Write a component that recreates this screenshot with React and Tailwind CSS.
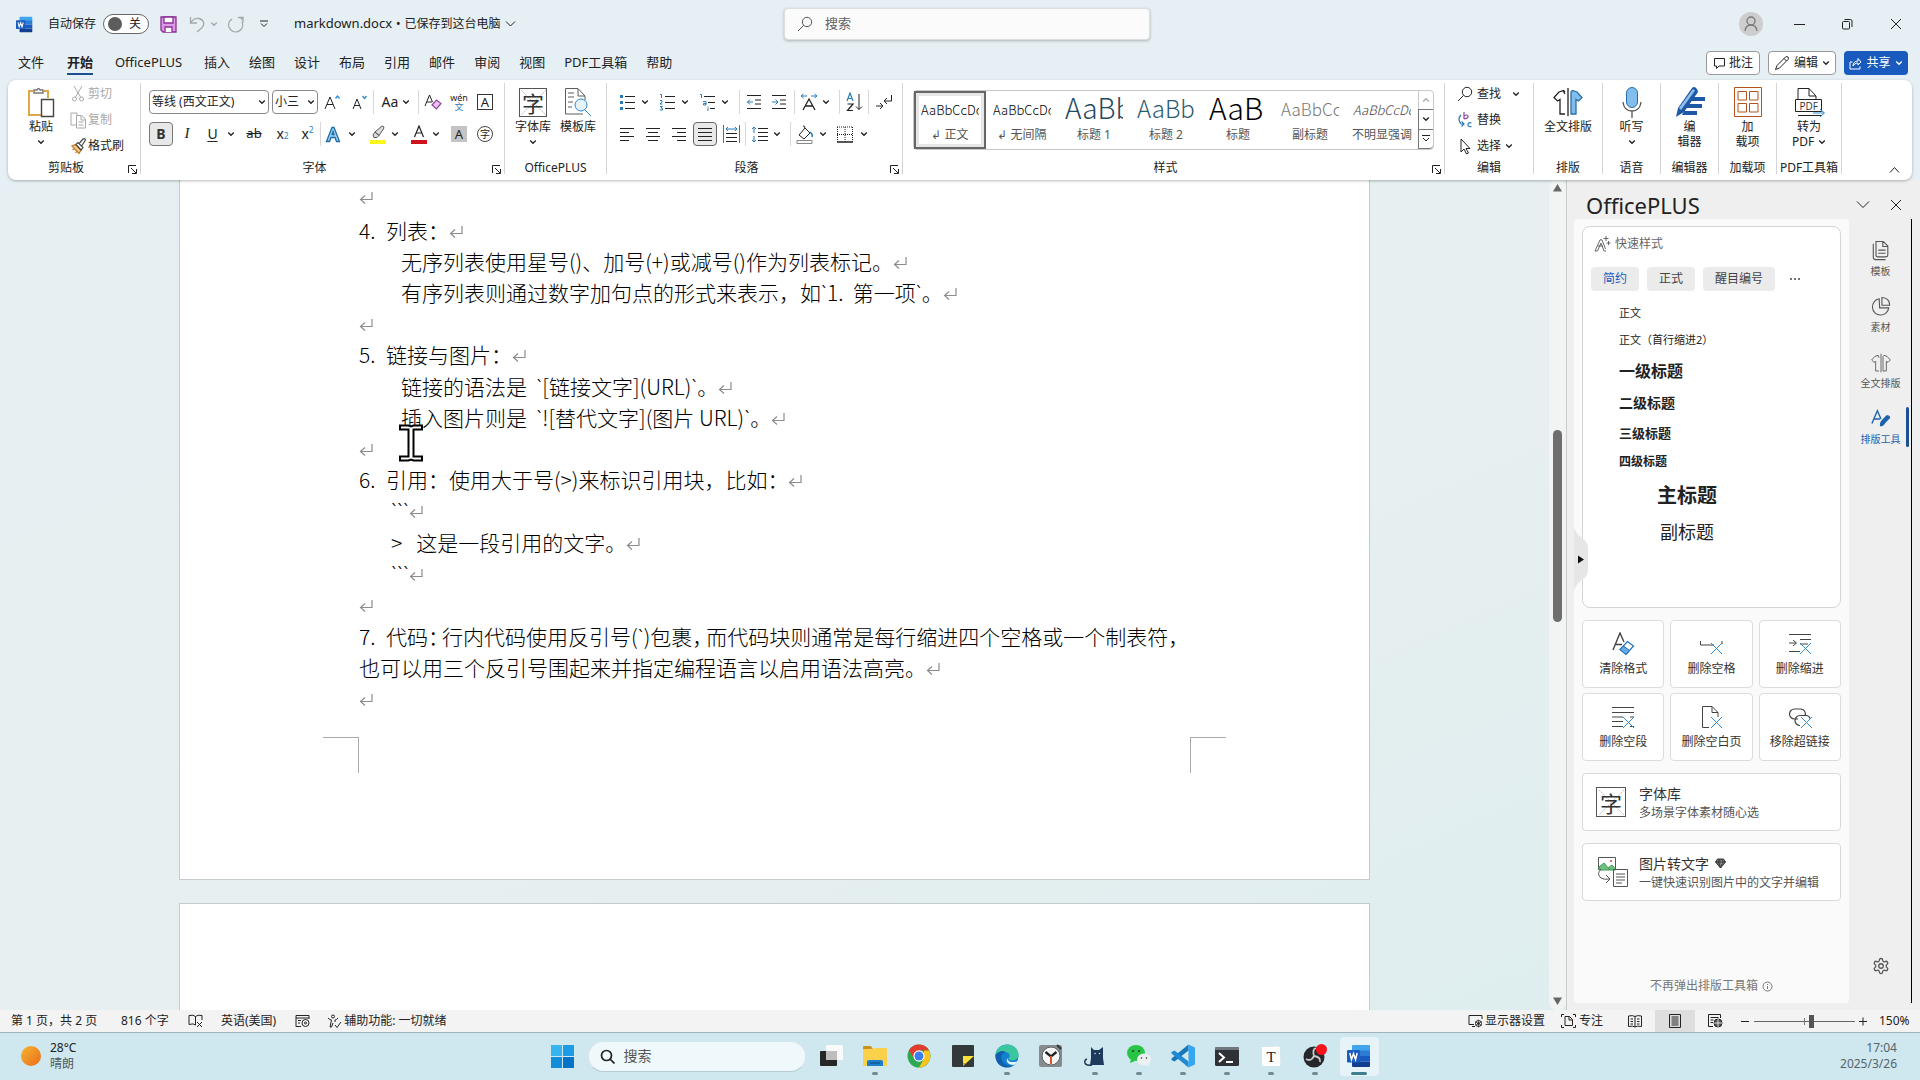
import React from 'react';

const Svg = ({ w = 16, h = 16, box, sw = 1, children, className = '' }) => (
  <svg width={w} height={h} viewBox={box || `0 0 ${w} ${h}`} fill="none" stroke="currentColor" strokeWidth={sw} className={'shrink-0 ' + className} aria-hidden="true">
    {children}
  </svg>
);
const Chev = ({ className = '' }) => (
  <Svg w={8} h={8} sw={1.3} className={className}><path d="M1.2 2.5 4 5.3 6.8 2.5" /></Svg>
);
const C = ({ w, label, className = '', children }) => (
  <button type="button" aria-label={label} className={`flex h-6 shrink-0 items-center justify-center ${w} ${className}`}>{children}</button>
);
const Drop = ({ w = 'w-3', label = '更多选项' }) => <C w={w} label={label}><Chev /></C>;
const Bar = ({ className = '' }) => <div className={`h-6 w-px shrink-0 self-center bg-[#d8d8d8] ${className}`} />;
const Sep = () => <div className="mb-[6px] mt-[3px] w-px shrink-0 bg-[#d4d4d4]" />;
const Launcher = () => (
  <button type="button" aria-label="对话框启动器" className="absolute bottom-[6px] right-[3px]">
    <Svg w={9} h={9}><path d="M.5 8V.5H8M3 3l5 5M8.5 4v4.5H4" /></Svg>
  </button>
);
const Group = ({ w, title, launcher, children }) => (
  <>
    <section className={`relative flex flex-col ${w}`}>
      <div className="h-[76px]">{children}</div>
      <div className={`h-6 whitespace-nowrap text-center leading-6 ${launcher ? 'pr-4' : ''}`}>{title}</div>
      {launcher && <Launcher />}
    </section>
    <Sep />
  </>
);
const Big = ({ w = 'w-full', icon, lines, chev }) => (
  <button type="button" className={`flex flex-col items-center pt-[6px] ${w}`}>
    <span className="mb-px flex h-8 items-center justify-center">{icon}</span>
    {lines.map((l, i) => <span key={i} className="whitespace-nowrap leading-[15px]">{l}</span>)}
    {chev && <Chev className="mt-1" />}
  </button>
);

const WordLogo = ({ s = 16 }) => (
  <Svg w={s} h={s} box="0 0 24 24" className="stroke-none">
    <path d="M6 1h16a1 1 0 0 1 1 1v5H5V2a1 1 0 0 1 1-1Z" fill="#41a5ee" />
    <path d="M5 6.500h18V12H5z" fill="#2b7cd3" />
    <path d="M5 12h18v5.500H5z" fill="#185abd" />
    <path d="M5 17.500h18V22a1 1 0 0 1-1 1H6a1 1 0 0 1-1-1Z" fill="#103f91" />
    <rect x="0" y="6" width="13" height="12.500" rx="1" fill="#1b5cbe" />
    <path d="m2.800 9 1.700 6.500L6.500 9.500l2 6L10.200 9" stroke="#fff" strokeWidth="1.500" />
  </Svg>
);
const GlassIcon = ({ s = 16 }) => (
  <Svg w={s} h={s} box="0 0 16 16"><circle cx="10" cy="6" r="4.700" /><path d="M6.600 9.400 1 15" /></Svg>
);
const GlyphBox = ({ big }) => (
  <span className={`relative flex items-center justify-center border border-[#555] text-[#333] ${big ? 'h-[30px] w-[30px]' : 'h-[29px] w-[28px]'}`}>
    <Svg w={27} h={27} className="absolute text-[#bbb]"><path d="M1 1l25 25M26 1 1 26" strokeDasharray="2 1" /></Svg>
    <span className="relative font-['Noto_Sans_CJK_SC',sans-serif] text-[22px] leading-[26px]">字</span>
  </span>
);
const Shirt = ({ w = 30, h = 28, fill = '#83bdeb', blue = '#2b6fa8' }) => (
  <Svg w={w} h={h} box="0 0 30 28" sw={1.3}>
    <path d="M12 4 10.500 2.500 6 4 1 9.500l3.500 3.500 2.500-1.500V26h5M10 2.500 12 6" />
    <path d="M18 4l1.500-1.500L24 4l5 5.500-3.500 3.500-2.500-1.500V26h-5Z" fill={fill} stroke={blue} />
    <path d="M15 0v28" />
  </Svg>
);
const lines = (a) => a.map(([x1, x2, y], i) => <path key={i} d={`M${x1} ${y}H${x2}`} />);
const Align = ({ kind }) => {
  const m = {
    left: [[1, 15, 2.5], [1, 10, 6.5], [1, 15, 10.5], [1, 10, 14.5]],
    center: [[1, 15, 2.5], [3, 13, 6.5], [1, 15, 10.5], [3, 13, 14.5]],
    right: [[1, 15, 2.5], [6, 15, 6.5], [1, 15, 10.5], [6, 15, 14.5]],
    full: [[1, 15, 2.5], [1, 15, 6.5], [1, 15, 10.5], [1, 15, 14.5]],
  };
  return <Svg w={16} h={17}>{lines(m[kind])}</Svg>;
};
const Cross = ({ x, y, s = 11 }) => <path d={`M${x} ${y}l${s} ${s}M${x + s} ${y}l${-s} ${s}`} stroke="#2a8ad4" />;

function TitleBar() {
  return (
    <header className="flex h-12 items-center">
      <div className="flex flex-1 items-center pl-4">
        <WordLogo s={17} />
        <span id="autosave" className="ml-[15px]">自动保存</span>
        <button type="button" role="switch" aria-checked="false" aria-labelledby="autosave" className="ml-[7px] flex h-5 w-[46px] items-center justify-between rounded-full border border-[#666] bg-white pl-1 pr-[7px]">
          <span className="h-[14px] w-[14px] rounded-full bg-[#5c5c5c]" /><span>关</span>
        </button>
        <button type="button" aria-label="保存" className="ml-[11px] text-[#8a2f95]">
          <Svg w={17} h={17} sw={1.3}><path d="M1 1h15v15H3l-2-2Z" fill="#dd9be4" /><path d="M4 1h9v6H4zM5 16v-5h7v5" fill="#fff" /></Svg>
        </button>
        <button type="button" aria-label="撤消" className="ml-3 text-[#a3a8ab]"><Svg w={16} h={17} sw={1.3}><path d="M1.500 1v6H8M1.500 7C4 3 7 2 10 2.500c5 1 6 6 3 9L8 16" /></Svg></button>
        <Chev className="ml-[5px] text-[#a3a8ab]" />
        <button type="button" aria-label="恢复" className="ml-[9px] text-[#a3a8ab]"><Svg w={17} h={17} sw={1.3}><path d="M11 1.500h5v5M15.500 1.500 14 3.500M14.800 5.500a7 7 0 1 1-12-.5L5 3" /></Svg></button>
        <button type="button" aria-label="自定义快速访问工具栏" className="ml-4"><Svg w={8} h={8}><path d="M0 1h8M1 3.500l3 3 3-3" /></Svg></button>
        <button type="button" className="ml-[26px] flex items-center whitespace-nowrap"><span className="mr-1 text-[13px]">markdown.docx</span>•<span className="ml-1">已保存到这台电脑</span><Svg w={11} h={8} className="ml-1"><path d="m1 1.500 4.500 4.500L10 1.500" /></Svg></button>
      </div>
      <label className="ml-4 flex h-8 w-[366px] items-center rounded border border-[#dcdfe1] bg-[#fbfbfb] px-3 text-[#555] shadow-[0_1px_3px_rgba(0,0,0,0.25)]">
        <GlassIcon />
        <input aria-label="搜索" placeholder="搜索" className="ml-3 w-full bg-transparent text-[13px] outline-none placeholder:text-[#616161]" />
      </label>
      <div className="flex flex-1 items-center justify-end pr-[18px]">
        <button type="button" aria-label="账户" className="mr-[31px] flex h-6 w-6 items-center justify-center rounded-full bg-[#cdcdcd] text-[#777]"><Svg w={16} h={18} sw={1.3}><circle cx="8" cy="6" r="4" /><path d="M2 16c.5-4 3-6 6-6s5.500 2 6 6" /></Svg></button>
        <button type="button" aria-label="最小化" className="mr-[37px]"><Svg w={11} h={12}><path d="M0 6.500h11" /></Svg></button>
        <button type="button" aria-label="向下还原" className="mr-[37px]"><Svg w={11} h={12}><rect x=".5" y="3.500" width="7" height="7.500" rx="1" /><path d="M2.500 1.500h6q1.500 0 1.500 1.500v6" /></Svg></button>
        <button type="button" aria-label="关闭"><Svg w={12} h={12}><path d="m1 1 10 10M11 1 1 11" /></Svg></button>
      </div>
    </header>
  );
}

function Tabs() {
  const tabs = ['插入', '绘图', '设计', '布局', '引用', '邮件', '审阅', '视图', 'PDF工具箱', '帮助'];
  return (
    <div className="flex h-8 items-start pl-[18px] pr-3 text-[13px]">
      <nav className="flex gap-[19px] whitespace-nowrap leading-7">
        <button type="button" className="mr-1">文件</button>
        <button type="button" className="h-[27px] border-b-2 border-[#1d4f91] font-bold leading-7">开始</button>
        <button type="button" className="min-w-[73px]">OfficePLUS</button>
        {tabs.map((t) => <button type="button" key={t}>{t}</button>)}
      </nav>
      <div className="ml-auto flex gap-2 pt-[3px] text-xs">
        <button type="button" className="flex h-6 w-[54px] items-center justify-center gap-[3px] rounded border border-[#999] bg-white"><Svg w={13} h={13}><path d="M1.500 1.500h10v7.500H6l-2.500 2.500V9h-2Z" /></Svg>批注</button>
        <button type="button" className="flex h-6 w-[68px] items-center justify-center gap-1 rounded border border-[#999] bg-white"><Svg w={16} h={16}><path d="M1.500 14.500 3 10.500 11.500 2q1.500-1 2.500 0t0 2.500L5.500 13ZM10 3.500 12.500 6" /></Svg>编辑<Chev /></button>
        <button type="button" className="flex h-6 w-[64px] items-center justify-center gap-1 rounded bg-[#185abd] text-white"><Svg w={13} h={13}><path d="M3.500 5H1v7h10V9.500M4 9c0-3 2-5 5-5V1.500L12 5 9 8V6C7 6 5 7 4 9Z" /></Svg>共享<Chev /></button>
      </div>
    </div>
  );
}

const styleItems = [
  ['AaBbCcDdE', '↲ 正文', 'text-[13px] leading-8 text-black'],
  ['AaBbCcDdE', '↲ 无间隔', 'text-[13px] leading-8 text-black'],
  ['AaBbC', '标题 1', 'text-[28px] leading-[26px] text-[#1f4a5f]'],
  ['AaBb', '标题 2', 'text-[24px] leading-[28px] text-[#2d5b70]'],
  ['AaB', '标题', 'text-[30px] leading-[26px] text-black'],
  ['AaBbCcD', '副标题', 'text-[17px] leading-[30px] text-[#777]'],
  ['AaBbCcDdE', '不明显强调', 'text-[13px] leading-8 italic text-[#444]'],
];

function Ribbon() {
  return (
    <div className="relative z-10 mx-2 flex h-[100px] rounded-lg bg-white shadow-[0_1px_3px_rgba(0,0,0,0.28)]">
      <Group w="w-[132px]" title="剪贴板" launcher>
        <div className="flex">
          <Big w="w-[66px]" lines={['粘贴']} chev icon={<Svg w={28} h={31} sw={1.4}><path d="M6 4H2v24h12M17 4h4v7" stroke="#e0a64a" strokeWidth="2" /><path d="M7 6V3h3q1.500-3 3 0h3v3Z" fill="#fff" stroke="#777" /><path d="M14.500 12.500h12v17h-12z" fill="#fff" stroke="#444" /></Svg>} />
          <div className="flex flex-col pt-px">
            <button type="button" className="flex h-[26px] w-14 items-center text-[#a9a9a9]"><Svg w={12} h={16} className="mr-[4px] -ml-[2px]"><path d="M2 0l6.500 11M10 0 3.500 11" /><circle cx="2.500" cy="13" r="2" /><circle cx="9.500" cy="13" r="2" /></Svg>剪切</button>
            <button type="button" className="flex h-[26px] w-14 items-center text-[#a9a9a9]"><Svg w={17} h={17} className="mr-px -ml-1"><path d="M7 13H1V1h6v2M6.500 3.500h5L15.500 7v9h-9zM11 4v4h4M8.500 10h5M8.500 13h5" /></Svg>复制</button>
            <button type="button" className="flex h-[26px] w-14 items-center whitespace-nowrap"><Svg w={17} h={17} className="mr-px -ml-1" sw={1.2}><path d="M2 8 9 15.500 11 12 5.500 6.500ZM4.500 10.500 2.500 12M7 13l-1.500 2" stroke="#c47a28" fill="#f6c88b" /><path d="m6 6.500 2-2 5 5-2 2.500ZM9.500 5 13 1q2-1 2.500 1L12 7.500" stroke="#444" fill="#fff" /></Svg>格式刷</button>
          </div>
        </div>
      </Group>
      <Group w="w-[363px]" title="字体" launcher>
        <div className="flex items-center pl-2 pt-[10px]">
          <span className="relative w-[120px]"><select aria-label="字体" className="block h-6 w-full appearance-none rounded border border-[#8a8a8a] bg-white pl-[2px]"><option>等线 (西文正文)</option></select><Chev className="pointer-events-none absolute right-[3px] top-2" /></span>
          <span className="relative ml-[3px] w-[46px]"><select aria-label="字号" className="block h-6 w-full appearance-none rounded border border-[#8a8a8a] bg-white pl-[2px]"><option>小三</option></select><Chev className="pointer-events-none absolute right-[3px] top-2" /></span>
          <C w="w-7" label="增大字号"><Svg w={17} h={17}><path d="M1 15 6 3l5 12M3 10.500h6" /><path d="m11.500 4.500 2-2.500 2 2.500" stroke="#2a8ad4" strokeWidth="1.300" /></Svg></C>
          <C w="w-[27px]" label="减小字号"><Svg w={16} h={17}><path d="m1 15 4-10 4 10M2.500 11.500h5" /><path d="m10.500 2 2 2.500 2-2.500" stroke="#2a8ad4" strokeWidth="1.300" /></Svg></C>
          <Bar />
          <C w="w-11" label="更改大小写" className="gap-1 text-[14px]"><span>Aa</span><Chev /></C>
          <Bar />
          <C w="w-[27px]" label="清除所有格式"><Svg w={18} h={18}><path d="M1 13 5.500 2l3 7M3 9h5" /><path d="m8 12 4.500-5L17 10.500 12.500 16Z" fill="#e6c4ef" stroke="#93449f" strokeWidth="1.200" /></Svg></C>
          <C w="w-[26px]" label="拼音指南" className="flex-col"><span className="text-[9px] leading-[9px]">wén</span><span className="text-[9px] leading-[10px] text-[#2a7bb8]">文</span></C>
          <C w="w-[26px]" label="字符边框"><span className="flex h-4 w-4 items-center justify-center border border-[#333] text-[13px] leading-3">A</span></C>
        </div>
        <div className="flex items-center pl-2 pt-2">
          <C w="w-6" label="加粗" className="rounded border border-[#777] bg-[#e8e8e8] text-[14px] font-bold text-[#333]">B</C>
          <C w="w-7" label="倾斜" className="font-['Liberation_Serif',serif] text-[15px] italic">I</C>
          <C w="w-[23px]" label="下划线" className="text-[14px] underline underline-offset-2">U</C>
          <Drop w="w-[14px]" />
          <C w="w-8" label="删除线" className="text-[13px] line-through">ab</C>
          <C w="w-[25px]" label="下标" className="text-[14px]">x<sub className="text-[8px] text-[#2a7bb8]">2</sub></C>
          <C w="w-[25px]" label="上标" className="text-[14px]">x<sup className="text-[8px] text-[#2a7bb8]">2</sup></C>
          <Bar />
          <C w="w-6" label="文本效果"><Svg w={16} h={17}><path d="M1.500 15.500 7 1.500h2l5.500 14h-3L10 11.500H6L4.500 15.500ZM7 8.500h2L8 5.500Z" fill="#9fd0f2" stroke="#1c6ea8" strokeWidth="1.300" /></Svg></C>
          <Drop w="w-[14px]" />
          <C w="w-[23px]" label="突出显示颜色" className="ml-[7px]"><Svg w={18} h={19}><path d="M1 15h16v4H1z" fill="#fdf61d" stroke="none" /><path d="M5 12.500 4 10l2-3 4 3.500-2 2ZM6 7l7-6q2 0 2 2l-5 7.500Z" fill="#ddd" stroke="#555" /></Svg></C>
          <Drop />
          <C w="w-[23px]" label="字体颜色" className="ml-[6px]"><Svg w={18} h={19}><path d="M1 15h16v4H1z" fill="#d0121c" stroke="none" /><path d="M4.500 12 9 1l4.500 11M6 8h6" strokeWidth="1.200" /></Svg></C>
          <Drop />
          <C w="w-[26px]" label="字符底纹" className="ml-1"><span className="flex h-4 w-4 items-center justify-center bg-[#c4c4c4] text-[13px] leading-4">A</span></C>
          <C w="w-[26px]" label="带圈字符"><span className="flex h-4 w-4 items-center justify-center rounded-full border border-[#444] text-[10px] leading-[14px]">字</span></C>
        </div>
      </Group>
      <Group w="w-[101px]" title="OfficePLUS">
        <div className="flex pl-[5px]">
          <Big w="w-[46px]" lines={['字体库']} chev icon={<GlyphBox />} />
          <Big w="w-[44px]" lines={['模板库']} icon={<Svg w={28} h={30}><path d="M19 27H1.500V1.500H14L21 9v4M14 2v7h7M4 6h6M4 10h6M4 15h5M4 20h4" stroke="#5c5c5c" /><circle cx="17" cy="18" r="6" stroke="#2a8ad4" fill="#e6f3fb" /><path d="m21 23 6 6" stroke="#2a8ad4" /></Svg>} />
        </div>
      </Group>
      <Group w="w-[295px]" title="段落" launcher>
        <div className="flex items-center pl-[9px] pt-[10px]">
          <C w="w-[22px]" label="项目符号"><Svg w={16} h={18}>{lines([[6, 16, 3.5], [6, 16, 9.5], [6, 16, 15.5]])}<path d="M1 2h3v3H1zM1 8h3v3H1zM1 14h3v3H1z" fill="#2a7bb8" stroke="none" /></Svg></C><Drop w="w-[14px]" />
          <C w="w-[22px]" label="编号" className="ml-1"><Svg w={16} h={18}>{lines([[6, 16, 3.5], [6, 16, 9.5], [6, 16, 15.5]])}<path d="M1 1.500h1.500V5M1 7.500h2v1.500L1 11h2.500M1 13.500h2.500L2 15l1.500.5V17H1" stroke="#2a7bb8" /></Svg></C><Drop w="w-[14px]" />
          <C w="w-[22px]" label="多级列表" className="ml-1"><Svg w={17} h={18}>{lines([[5, 16, 3.5], [9, 16, 9.5], [11, 16, 15.5]])}<path d="M1 1.500h1.500V5M4 8.500h3V12H4.500v-1.500H7M9 13v.5M9 14.500V18" stroke="#2a7bb8" /></Svg></C><Drop w="w-[14px]" />
          <Bar className="ml-[7px]" />
          <C w="w-6" label="减少缩进量" className="ml-[2px]"><Svg w={16} h={16}>{lines([[1, 15, 1.5], [9, 15, 6], [9, 15, 10], [1, 15, 14.5]])}<path d="M7 8H1m3-2.500L1.500 8 4 10.500" stroke="#2a7bb8" /></Svg></C>
          <C w="w-[26px]" label="增加缩进量"><Svg w={16} h={16}>{lines([[1, 15, 1.5], [9, 15, 6], [9, 15, 10], [1, 15, 14.5]])}<path d="M1 8h6M4.500 5.500 7 8l-2.500 2.500" stroke="#2a7bb8" /></Svg></C>
          <Bar className="ml-[2px]" />
          <C w="w-[22px]" label="中文版式" className="ml-[3px]"><Svg w={18} h={18}><path d="m3 17 6-11 6 11M5 13h8" strokeWidth="1.300" /><path d="M7 3H1m2.500-2L1 3l2.500 2M11 3h6m-2.500-2L17 3l-2.500 2" stroke="#2a7bb8" /></Svg></C><Drop />
          <Bar className="ml-[7px]" />
          <C w="w-[26px]" label="排序" className="ml-px"><Svg w={17} h={20}><path d="m1 9 3-8 3 8M2 6.500h4" stroke="#2a7bb8" strokeWidth="1.200" /><path d="M1.500 12H7l-5.500 6.500H7" strokeWidth="1.200" /><path d="M13 2v15.500M10 14.500l3 3 3-3" /></Svg></C>
          <Bar className="ml-px" />
          <C w="w-6" label="显示编辑标记" className="ml-[3px]"><Svg w={18} h={18}><path d="M16.500 2v6H9m3-3L9 8l3 3M1 13h7M5 10l3 3-3 3" /></Svg></C>
        </div>
        <div className="flex items-center pl-[9px] pt-2">
          <C w="w-[22px]" label="左对齐"><Align kind="left" /></C>
          <C w="w-[30px]" label="居中"><Align kind="center" /></C>
          <C w="w-[22px]" label="右对齐"><Align kind="right" /></C>
          <C w="w-6" label="两端对齐" className="ml-[3px] rounded border border-[#666] bg-[#e8e8e8]"><Align kind="full" /></C>
          <C w="w-7" label="分散对齐"><Svg w={17} h={18}>{lines([[3, 14, 8.5], [3, 14, 12.5], [3, 14, 16.500]])}<path d="M.5 0v18M16.500 0v18M3 4h11M5 2 3 4l2 2M12 2l2 2-2 2" stroke="#2a7bb8" /></Svg></C>
          <Bar />
          <C w="w-6" label="行和段落间距" className="ml-[2px]"><Svg w={18} h={17}>{lines([[7, 17, 2.500], [7, 17, 6.500], [7, 17, 10.500], [7, 17, 14.500]])}<path d="M3 1v6M1 3l2-2 2 2M3 10v6M1 14l2 2 2-2" stroke="#2a7bb8" /></Svg></C><Drop w="w-[10px]" />
          <Bar className="ml-2" />
          <C w="w-6" label="底纹" className="ml-[2px]"><Svg w={18} h={19}><path d="m3 10 6-7 5 5-6 6ZM7 1q2-1 2 3" /><path d="M14 7q3 2 2 5" stroke="#2a7bb8" strokeWidth="1.500" /><path d="M1 15.500h15v3H1z" stroke="#888" fill="#fff" /></Svg></C><Drop />
          <C w="w-[26px]" label="边框" className="ml-[3px]"><Svg w={16} h={17}><path d="M.5 1v15M15.500 1v15M8 1v15M0 1h16M0 8.500h16" strokeDasharray="1 1" /><path d="M0 16h16" strokeWidth="1.500" /></Svg></C><Drop />
        </div>
      </Group>
      <section className="relative flex min-w-0 flex-1 flex-col">
        <div className="h-[76px] px-[10px] pt-[10px]">
          <div className="flex h-[60px] rounded border border-[#c9c9c9]">
            <div className="flex min-w-0 flex-1 overflow-hidden">
              {styleItems.map(([s, n, k], i) => (
                <button type="button" key={n} className={`flex w-[72px] shrink-0 flex-col items-center ${i === 0 ? 'border-2 border-[#666] pt-px shadow-[inset_0_0_0_3px_#e6e6e6]' : 'pt-[3px]'}`}>
                  <span className={`h-8 w-[58px] overflow-hidden whitespace-nowrap text-left font-['Noto_Sans_CJK_SC',sans-serif] font-light ${k}`}>{s}</span>
                  <span className="whitespace-nowrap leading-[18px] text-[#555]">{n}</span>
                </button>
              ))}
            </div>
            <div className="flex w-[15px] flex-col">
              <button type="button" aria-label="上一行" className="flex flex-1 items-center justify-center border-l border-[#c9c9c9] text-[#aaa]"><Chev className="rotate-180" /></button>
              <button type="button" aria-label="下一行" className="flex flex-1 items-center justify-center border border-r-0 border-[#777]"><Chev /></button>
              <button type="button" aria-label="其他样式" className="flex flex-1 items-center justify-center rounded-br border border-r-0 border-t-0 border-[#777]"><Svg w={8} h={9}><path d="M0 1.500h8M1 4l3 3 3-3" /></Svg></button>
            </div>
          </div>
        </div>
        <div className="h-6 pr-4 text-center leading-6">样式</div>
        <Launcher />
      </section>
      <Sep />
      <Group w="w-[88px]" title="编辑">
        <div className="flex flex-col pl-3 pt-px">
          <button type="button" className="flex h-[26px] items-center"><GlassIcon /><span className="ml-1 mr-[11px]">查找</span><Chev /></button>
          <button type="button" className="flex h-[26px] items-center"><Svg w={16} h={18} sw={1.2}><path d="M7 1v7M7 5q3-2 4 0t-4 3" stroke="#93449f" /><path d="M14.500 12q-3-1-3.500 1.500t3.500 2M4 4Q0 8 4 13h3M4.500 10.500 7 13l-2.500 2.500" stroke="#2a7bb8" /></Svg><span className="ml-1">替换</span></button>
          <button type="button" className="flex h-[26px] items-center"><Svg w={16} h={17}><path d="M4 1v13l3-3 2.500 5 2-1L9 10.500h4Z" /></Svg><span className="ml-1 mr-1">选择</span><Chev /></button>
        </div>
      </Group>
      <Group w="w-[68px]" title="排版"><Big lines={['全文排版']} icon={<Shirt />} /></Group>
      <Group w="w-[57px]" title="语音"><Big lines={['听写']} chev icon={<Svg w={20} h={31}><rect x="4.500" y=".5" width="11" height="20" rx="5.500" fill="#83bdeb" stroke="#2b6fa8" /><path d="M1 15q1 9 9 9t9-9M10 24v7" stroke="#555" strokeWidth="1.300" /></Svg>} /></Group>
      <Group w="w-[57px]" title="编辑器"><Big lines={['编', '辑器']} icon={<Svg w={31} h={32} className="stroke-none"><path d="M18 11h13v4H16zM14 18h14v4H12zM10 25h13v4H8z" fill="#2058a8" /><path d="M4 22 18 2q2-2 4 0t2 4L10 26l-8 5Z" fill="#2058a8" /><path d="m5 22 14-19 2 1.500L7 24Z" fill="#8fc1ea" /></Svg>} /></Group>
      <Group w="w-[57px]" title="加载项"><Big lines={['加', '载项']} icon={<Svg w={28} h={30} className="text-[#b3521c]"><path d="M.5.500h27v29H.5zM4 4.500h8.500v8.500H4zM15.500 4.500H24v8.500h-8.500zM4 16.500h8.500V25H4zM15.500 16.500H24V25h-8.500z" /></Svg>} /></Group>
      <Group w="w-[64px]" title="PDF工具箱"><Big lines={['转为', <span key="p" className="flex items-center gap-1">PDF<Chev /></span>]} icon={<Svg w={31} h={31}><path d="M4 12V1.500h11L22 9v3M15 1.500V9h7" /><path d="M1.500 12.500h26v12h-26z" fill="#fff" /><text x="5.500" y="22.500" fontSize="10" fill="#333" stroke="none" fontFamily="Open Sans, sans-serif">PDF</text><path d="M4 28.500h24" /><path d="M19 26h11M26 22l4.500 4-4.500 4" stroke="#2a8ad4" /></Svg>} /></Group>
      <div className="relative w-[70px]">
        <button type="button" aria-label="折叠功能区" className="absolute bottom-[6px] right-3"><Svg w={11} h={8}><path d="m1 6.500 4.500-5 4.500 5" /></Svg></button>
      </div>
    </div>
  );
}

const Mark = () => (
  <svg width="14" height="17" viewBox="0 0 14 17" fill="none" stroke="#8c8c8c" strokeWidth="1.200" className="inline-block" aria-hidden="true"><path d="M13 1v7.500H1.500M6 4.500l-4.500 4 4.500 4" /></svg>
);
const N = ({ children }) => <span className="inline-block w-[27px]">{children}</span>;
const Half = ({ children }) => <span className="inline-block w-[14px]">{children}</span>;
const Tick = ({ children = '`' }) => <span className="font-['Roboto',sans-serif]">{children}</span>;
const P = ({ className = '', children }) => <p className={`h-[31px] ${className}`}>{children}</p>;
const Empty = () => <P><Mark /></P>;

function Document() {
  return (
    <main className="relative min-w-0 flex-1 overflow-hidden px-[179px]">
      <article className="relative mx-auto h-[700px] max-w-[1191px] border border-t-0 border-[#c4cbce] bg-white px-[179px] pt-px text-[21px] font-light leading-[31px] text-black">
        <div className="whitespace-pre font-['Noto_Sans_CJK_SC',sans-serif]">
          <Empty />
          <P className="mt-[3px]"><N>4.</N>列表：<Mark /></P>
          <P className="pl-[42px]">无序列表使用星号()、加号(+)或减号()作为列表标记。<Mark /></P>
          <P className="pl-[42px]">有序列表则通过数字加句点的形式来表示，如<Tick />1.  第一项<Tick />。<Mark /></P>
          <Empty />
          <P><N>5.</N>链接与图片：<Mark /></P>
          <P className="mt-px pl-[42px]">链接的语法是  <Tick />[链接文字](URL)<Tick />。<Mark /></P>
          <P className="pl-[42px]">插入图片则是  <Tick />![替代文字](图片 URL)<Tick />。<Mark /></P>
          <Empty />
          <P><N>6.</N>引用：使用大于号(&gt;)来标识引用块，比如：<Mark /></P>
          <P className="pl-8"><Tick>```</Tick><Mark /></P>
          <P className="mt-px pl-8">&gt;   这是一段引用的文字。<Mark /></P>
          <P className="pl-8"><Tick>```</Tick><Mark /></P>
          <Empty />
          <P className="mt-px"><N>7.</N>代码<Half>：</Half>行内代码使用反引号(<Tick />)包裹<Half>，</Half>而代码块则通常是每行缩进四个空格或一个制表符，</P>
          <P>也可以用三个反引号围起来并指定编程语言以启用语法高亮。<Mark /></P>
          <Empty />
        </div>
        <div className="-mx-9 mt-[23px] flex justify-between">
          <div className="h-9 w-9 border-r border-t border-[#aaa]" />
          <div className="h-9 w-9 border-l border-t border-[#aaa]" />
        </div>
        <svg width="24" height="38" viewBox="0 0 24 38" fill="#fff" stroke="#000" strokeWidth="2" className="absolute left-[219px] top-[244px]" aria-hidden="true"><path d="M1 1.500h8.500l2.500 1 2.500-1H23v4h-8.500v27H23v4h-8.500l-2.500-1-2.500 1H1v-4h8.500v-27H1Z" /></svg>
      </article>
      <article className="mx-auto mt-[23px] h-[300px] max-w-[1191px] border border-[#c4cbce] bg-white" />
    </main>
  );
}

function SidePanel() {
  const previews = [
    ['正文', 'text-[11px] leading-[26px]'],
    ['正文（首行缩进2）', 'text-[11px] leading-[28px]'],
    ['一级标题', 'text-[16px] font-bold leading-[34px]'],
    ['二级标题', 'text-[14px] font-bold leading-[30px]'],
    ['三级标题', 'text-[13px] font-bold leading-[30px]'],
    ['四级标题', 'text-[12px] font-bold leading-[28px]'],
    ['主标题', 'pl-[38px] text-[20px] font-bold leading-[39px]'],
    ['副标题', 'pl-[41px] text-[18px] leading-[35px]'],
  ];
  const tools = [
    ['清除格式', <><path d="M2 18 9 1l4 9M4.500 12.500H11" strokeWidth="1.400" /><path d="m9 17.500 7.500-8 6 4.500-7.500 8.500Z" fill="#fff" stroke="#1a6fc0" strokeWidth="1.200" /><path d="m9 17.500 3.500-3.500 6 4.500-3.500 4Z" fill="#69a9e2" stroke="#1a6fc0" /></>],
    ['删除空格', <><path d="M1.500 9v4H15M23 9v3" /><Cross x={12} y={11} /></>],
    ['删除缩进', <><path d="M1 2.500h22M12 7.500h11M12 12h8M1 19.500h11M1 11h7M5 8l3.500 3L5 14" /><Cross x={12} y={11} /></>],
    ['删除空段', <><path d="M1 2.500h22M1 7.500h22M1 12h11M1 16.500h11M1 21.500h11M19 12h4M19 21.500h4" /><Cross x={12} y={12} /></>],
    ['删除空白页', <><path d="M10 22.500H3.500v-21H13l6 6V12M13 1.500v6h6" /><Cross x={12} y={12} /></>],
    ['移除超链接', <><path d="M10 14H6.500a5 5 0 0 1 0-10H13a5 5 0 0 1 4 7M12 20.500a5 5 0 0 1 0-10h7a4 4 0 0 1 3 3" strokeWidth="1.200" /><Cross x={13} y={12} /></>],
  ];
  const rail = [
    ['模板', <><path d="M6.500 1.500h8l5 5v10q0 2-2 2h-9q-2 0-2-2ZM14 1.500V7h5.500M9 11h8M9 14.500h8M3.500 4v15q0 2.500 2.500 2.500h11" /></>],
    ['素材', <><path d="M10 3a9 9 0 1 0 10.500 10H10.500ZM13 1.500V10h8.500q0-8-8.500-8.500Z" /></>],
    ['全文排版', null],
    ['排版工具', <><path d="M2 17 8 3l4 9M4.500 12H11" strokeWidth="1.500" /><path d="M11 20q-1-4 2-7l5-5q4-1 4 3l-5 5q-2 4-6 4Z" fill="#1d62ae" stroke="none" /></>],
  ];
  return (
    <aside className="flex w-[354px] shrink-0 flex-col border-l border-[#ccc] bg-[#efefef]">
      <div className="flex h-[39px] items-center pl-[19px] pr-[18px] pt-[10px] text-[#222]">
        <h2 className="text-[22px] leading-7">OfficePLUS</h2>
        <button type="button" aria-label="任务窗格选项" className="ml-auto mr-5"><Svg w={14} h={10}><path d="m1 1.500 6 6 6-6" /></Svg></button>
        <button type="button" aria-label="关闭窗格"><Svg w={12} h={12}><path d="m1 1 10 10M11 1 1 11" /></Svg></button>
      </div>
      <div className="mb-[7px] mr-2 flex min-h-0 flex-1 border-r border-black pl-[7px]">
        <div className="relative flex w-[275px] flex-col rounded bg-[#fafafa] px-2 pt-[7px] text-[#333]">
          <div className="h-[382px] rounded-lg border border-[#d5d5d5] bg-white px-2">
            <div className="flex h-[34px] items-center gap-1 pl-[2px] text-[#666]"><Svg w={18} h={18}><path d="M2 16 7 5q1-1 2 0l3.500 9M5 11h5M2 16h2.500L8 8l3 8h2M13 1v5M10.500 3.500h5M15.500 6v4M13.500 8h4" /></Svg>快速样式</div>
            <div className="mt-[6px] flex h-6 items-stretch gap-2 text-[#444]">
              <button type="button" className="w-12 rounded bg-[#ebebeb] text-[#185abd]">简约</button>
              <button type="button" className="w-12 rounded bg-[#ebebeb]">正式</button>
              <button type="button" className="w-[72px] rounded bg-[#ebebeb]">醒目编号</button>
              <button type="button" aria-label="更多样式" className="ml-[6px]"><Svg w={12} h={4} className="fill-[#444] stroke-none"><circle cx="2" cy="2" r="1" /><circle cx="6" cy="2" r="1" /><circle cx="10" cy="2" r="1" /></Svg></button>
            </div>
            <div className="flex flex-col items-start pl-7 pt-[9px] text-[#222]">
              {previews.map(([t, k]) => <button type="button" key={t} className={`whitespace-nowrap ${k}`}>{t}</button>)}
            </div>
          </div>
          <div className="mt-3 grid grid-cols-3 gap-x-[6px] gap-y-[5px]">
            {tools.map(([t, d]) => (
              <button type="button" key={t} className="flex h-[68px] flex-col items-center rounded border border-[#dcdcdc] bg-white pt-[11px]"><Svg w={24} h={24} className="text-[#444]">{d}</Svg><span className="mt-[2px] leading-[22px]">{t}</span></button>
            ))}
          </div>
          <button type="button" className="mt-3 flex h-[58px] shrink-0 items-center gap-[13px] rounded border border-[#d9d9d9] bg-white pl-[13px] text-left">
            <GlyphBox big /><span><span className="block text-[14px] leading-5">字体库</span><span className="block leading-[17px] text-[#555]">多场景字体素材随心选</span></span>
          </button>
          <button type="button" className="mt-3 flex h-[58px] shrink-0 items-center gap-[11px] rounded border border-[#d9d9d9] bg-white pl-[14px] text-left">
            <Svg w={31} h={31} className="text-[#555]"><path d="M1.500 13V.500h17v12" /><path d="m2 10 5-4 6 7H2ZM11 11l4-3 3.500 4v1H13Z" fill="#6fc07e" stroke="#3c9a55" /><circle cx="14" cy="4" r="1" fill="#d33" stroke="none" /><path d="M4 12q-5 5 0 9 3 2 8 1M9 18l4 4-4 4M16.500 12.500h14v17h-14zM19 17h9M19 20h9M19 23h9M19 26h6" /></Svg>
            <span><span className="flex items-center gap-[6px] text-[14px] leading-5">图片转文字<Svg w={11} h={11} className="fill-[#777]"><path d="M2.500 1h6l2 3-5 6-5-6ZM.5 4h10M5.500 10 3.500 4l1-3M5.500 10l2-6-1-3" /></Svg></span><span className="block leading-[17px] text-[#555]">一键快速识别图片中的文字并编辑</span></span>
          </button>
          <a href="#toolbox" className="mb-[9px] mt-auto flex items-center justify-center gap-1 text-[#777]">不再弹出排版工具箱<Svg w={11} h={11}><circle cx="5.500" cy="5.500" r="4.500" /><path d="M5.500 5v3M5.500 3v1" /></Svg></a>
          <button type="button" aria-label="折叠" className="absolute left-0 top-[308px]"><Svg w={15} h={64} className="stroke-none"><path d="M0 0q1 6 8 11 6 4 6 10v22q0 6-6 10-7 5-8 11Z" fill="#e6e6e6" /><path d="M4 28.500v8l6-4Z" fill="#111" /></Svg></button>
        </div>
        <nav className="relative flex flex-1 flex-col items-center pl-px pt-[21px] text-[10px] text-[#555]">
          {rail.map(([t, d], i) => (
            <button type="button" key={t} className={`flex h-14 flex-col items-center whitespace-nowrap ${i === 3 ? 'text-[#1d62ae]' : ''}`}>
              {d ? <Svg w={20} h={22} box="1 0 22 24" sw={1.2}>{d}</Svg> : <Shirt w={20} h={22} fill="none" blue="#555" />}
              <span className="leading-[18px]">{t}</span>
            </button>
          ))}
          <div className="absolute right-[2px] top-[188px] h-10 w-[3px] rounded bg-[#1d4f91]" />
          <button type="button" aria-label="设置" className="mb-7 mt-auto"><Svg w={18} h={18} box="0 0 24 24" sw={1.7}><path d="M12.220 2h-.44a2 2 0 0 0-2 2v.18a2 2 0 0 1-1 1.730l-.43.250a2 2 0 0 1-2 0l-.15-.08a2 2 0 0 0-2.730.730l-.22.380a2 2 0 0 0 .73 2.730l.15.100a2 2 0 0 1 1 1.720v.510a2 2 0 0 1-1 1.740l-.15.090a2 2 0 0 0-.73 2.730l.22.380a2 2 0 0 0 2.730.730l.15-.08a2 2 0 0 1 2 0l.43.250a2 2 0 0 1 1 1.730V20a2 2 0 0 0 2 2h.440a2 2 0 0 0 2-2v-.18a2 2 0 0 1 1-1.730l.43-.25a2 2 0 0 1 2 0l.15.080a2 2 0 0 0 2.730-.73l.22-.39a2 2 0 0 0-.73-2.730l-.15-.08a2 2 0 0 1-1-1.740v-.5a2 2 0 0 1 1-1.740l.15-.09a2 2 0 0 0 .73-2.730l-.22-.38a2 2 0 0 0-2.730-.73l-.15.080a2 2 0 0 1-2 0l-.43-.25a2 2 0 0 1-1-1.730V4a2 2 0 0 0-2-2z" /><circle cx="12" cy="12" r="3" /></Svg></button>
        </nav>
      </div>
    </aside>
  );
}

function StatusBar() {
  return (
    <footer className="flex h-[22px] shrink-0 items-center whitespace-nowrap bg-[#f3f3f3] pl-[11px] pr-2 text-[#222]">
      <span className="min-w-[90px]">第 1 页，共 2 页</span>
      <span className="ml-5 min-w-[49px]">816 个字</span>
      <Svg w={15} h={14} className="ml-[18px]"><path d="M7.500 11q-2-2-6.500-.500V1.500q4.500-1 6.500 1 2-2 6.500-1V6M7.500 2.500V11M9 8l5 5M14 8l-5 5" /></Svg>
      <span className="ml-[18px]">英语(美国)</span>
      <Svg w={15} h={14} className="ml-[19px]"><path d="M6 12.500H1v-11h13V5M1 4h13M3 6.500h3M3 9h2" /><circle cx="10.500" cy="9" r="3.500" /><circle cx="10.500" cy="9" r="1" /></Svg>
      <Svg w={15} h={15} className="ml-[17px]"><circle cx="6" cy="2.500" r="1.500" /><path d="M1 4q2 2 3.500 2L3 13h1.500L6 9M11 4Q9.500 6 8 6v2M8 11l2 2.500L14 8" /></Svg>
      <span className="ml-[2px]">辅助功能: 一切就绪</span>
      <Svg w={15} h={14} className="ml-auto"><path d="M6 10.500H1v-9h13V5M4 12.500h3" /><circle cx="10.500" cy="9.500" r="3" /><circle cx="10.500" cy="9.500" r="1" /><path d="M10.500 5.500v8M7 7.500l7 4M14 7.500l-7 4" strokeWidth=".6" /></Svg>
      <span className="ml-[2px]">显示器设置</span>
      <Svg w={15} h={14} className="ml-4"><path d="M3 .5H.5V3M12 .5h2.500V3M3 13.500H.5V11M12 13.500h2.500V11M4 2.500h4.500l3 3v6H4ZM8 2.500V6h3.500" /></Svg>
      <span className="ml-[3px]">专注</span>
      <button type="button" aria-label="阅读视图" className="ml-3 flex h-[22px] w-10 items-center justify-center"><Svg w={14} h={13}><path d="M7 12Q5 10.500.5 11.500V1Q5 0 7 1.500 9 0 13.500 1v10.500Q9 10.500 7 12V1.500M2.500 4H5M2.500 6.500H5M2.500 9H5M9 4h2.500M9 6.500h2.500M9 9h2.500" /></Svg></button>
      <button type="button" aria-label="页面视图" className="flex h-[22px] w-10 items-center justify-center bg-[#dedede]"><Svg w={12} h={14}><path d="M.5.500h11v13H.5zM2.500 3h7M2.500 5h7M2.500 7h7M2.500 9h7M2.500 11h7" /></Svg></button>
      <button type="button" aria-label="Web 版式视图" className="flex h-[22px] w-10 items-center justify-center"><Svg w={15} h={14}><path d="M5 12.500H.5v-12h12V4M2.500 3.500h8M2.500 6h3M2.500 8.500H5" /><circle cx="10" cy="9" r="4" fill="#555" /><path d="M6 9h8M10 5v8" stroke="#fff" strokeWidth=".8" /></Svg></button>
      <button type="button" aria-label="缩小" className="ml-[6px]"><Svg w={8} h={9}><path d="M0 4.500h8" /></Svg></button>
      <span className="relative ml-[5px] flex w-[101px] items-center">
        <span className="absolute left-[50px] h-[7px] w-px bg-[#777]" />
        <input type="range" aria-label="缩放" min="0" max="100" defaultValue="57" className="h-px w-full appearance-none bg-[#666] outline-none [&::-webkit-slider-thumb]:h-[13px] [&::-webkit-slider-thumb]:w-[5px] [&::-webkit-slider-thumb]:appearance-none [&::-webkit-slider-thumb]:bg-[#555]" />
      </span>
      <button type="button" aria-label="放大" className="ml-1"><Svg w={8} h={9}><path d="M0 4.500h8M4 .5v8" /></Svg></button>
      <span className="ml-3 min-w-[33px]">150%</span>
    </footer>
  );
}

function Taskbar() {
  const apps = [
    ['任务视图', 0, <><rect x="1" y="7" width="17" height="15" rx="1" fill="#262626" /><rect x="7" y="1" width="17" height="15" rx="1" fill="#f8fafb" /><path d="M7 7h11v9H7z" fill="#bdbdbd" /></>],
    ['文件资源管理器', 1, <><path d="M0 3q0-1 1-1h7l2 3H0Z" fill="#c9921a" /><path d="M0 5q12 0 13-1h10q1 0 1 1v16q0 1-1 1H1q-1 0-1-1Z" fill="#fbd04b" /><path d="M4 22v-4q0-2 2-2h12q2 0 2 2v4Z" fill="#1d7fcb" /><path d="M7 19h10" stroke="#0e5a99" strokeWidth="1.500" /></>],
    ['Chrome', 0, <><circle cx="12" cy="12" r="11.500" fill="#2da94f" /><path d="M2 6.300A11.500 11.500 0 0 1 22 6.500H12L7 14.800Z" fill="#e33b2e" /><path d="M22 6.500A11.500 11.500 0 0 1 12 23.500L17 14.800V6.500Z" fill="#fcc31e" /><circle cx="12" cy="12" r="5.700" fill="#fff" /><circle cx="12" cy="12" r="4.500" fill="#3b7ded" /></>],
    ['便笺', 0, <><rect x="1" y="1" width="22" height="22" rx="1" fill="#33383b" /><path d="M12 12h11L12 22Z" fill="#fce13a" /><path d="M12 22v-3h3Z" fill="#c8a800" /></>],
    ['Edge', 1, <><circle cx="12" cy="12" r="11.500" fill="#1480d0" /><path d="M.5 11C1 4 6 .5 12 .5c7 0 11.500 5 11.500 10 0 4-3 6-6.500 6-3 0-4-1-3-2.500 2-3-.5-6-4-6-4.500 0-8 3-9.500 3Z" fill="#3cc6a0" /><path d="M.5 11C3 7 8 6 11 8c-5 1-6 6-3 10 2 3 6 4 9 4C8 26 0 20 .5 11Z" fill="#0f5fae" /><path d="M13.500 14c-1.500 2 .5 4 3.500 4s5-.5 5.500-1q-1.500 3-4 4c-6 0-9-5-5-7Z" fill="#e6f5fb" /></>],
    ['时钟', 0, <><rect x="0" y="1" width="23" height="22" rx="2" fill="#858b8f" /><path d="m18 1 4 4" stroke="#333" strokeWidth="2" /><circle cx="12" cy="12" r="9" fill="#f7f7f7" stroke="#5c6165" /><path d="m6.500 8 5.500 4.500L17.500 8" fill="none" stroke="#222" strokeWidth="2.300" /><path d="M12 12v8" stroke="#e0522d" strokeWidth="2" /></>],
    ['Clash', 1, <><path d="M8 3l3 3h5l4-3v11l1 7H7l1-7Z" fill="#1d3a5c" /><path d="M9 21q-6 1-7-2t2-4" stroke="#1d3a5c" strokeWidth="1.500" fill="none" /><circle cx="12" cy="9.500" r=".8" fill="#cde" /><circle cx="16.500" cy="9.500" r=".8" fill="#cde" /></>],
    ['微信', 1, <><ellipse cx="9" cy="9" rx="9" ry="8" fill="#28c445" /><path d="M4 15l-1 4 5-2Z" fill="#28c445" /><ellipse cx="17" cy="15.500" rx="7" ry="6" fill="#eef1f2" /><path d="M19 20l2 3 1-4Z" fill="#eef1f2" /><g fill="#333"><circle cx="6" cy="7" r="1" /><circle cx="12" cy="7" r="1" /><circle cx="14.500" cy="14" r=".8" /><circle cx="19.500" cy="14" r=".8" /></g></>],
    ['VS Code', 1, <><path d="M17.500.5V6.500L3.500 17.500.5 16v-1.500Z" fill="#1677bd" /><path d="M17.500 23.500v-6L3.500 6.500.5 8v1.500Z" fill="#1f8ad2" /><path d="M17.500.5 24 3.500v17l-6.500 3Z" fill="#35a6ef" /></>],
    ['终端', 1, <><rect x="0" y="3" width="24" height="19" rx="1.500" fill="#2e3236" /><path d="M0 6V4.500Q0 3 1.500 3h21Q24 3 24 4.500V6Z" fill="#70777d" /><path d="m4 9 5 4.500L4 18M11 18h7" fill="none" stroke="#fff" strokeWidth="2" /></>],
    ['Typora', 1, <><path d="m2 3 18-1 2 19-18 1Z" fill="#e8ecee" /><rect x="3" y="3" width="18" height="19" rx="1" fill="#fff" /><text x="12" y="18" fontSize="15" textAnchor="middle" fill="#222" fontFamily="Liberation Serif, serif">T</text></>],
    ['OBS', 1, <><circle cx="11" cy="13" r="10.500" fill="#25272b" /><path d="M11 12q-2-7 2-8M11 12q7 1 6 6M11 12q-3 6-8 3" stroke="#c9c9c9" strokeWidth="1.800" fill="none" /><circle cx="18.500" cy="5.500" r="5.500" fill="#f5121a" /></>],
  ];
  return (
    <footer className="flex h-12 shrink-0 items-center border-t border-[#9fb4bd] bg-[#cfe7ee] text-[#222]">
      <div className="flex flex-1 items-center gap-[9px] pb-[2px] pl-[21px]">
        <span className="h-5 w-5 rounded-full bg-gradient-to-br from-[#f3b52f] to-[#ea6a1c]" />
        <div className="leading-4"><div>28°C</div><div className="text-[#4c5a61]">晴朗</div></div>
      </div>
      <div className="flex items-center pb-px pl-[11px]">
        <button type="button" aria-label="开始" className="mr-[14px]"><Svg w={23} h={23} className="stroke-none"><path d="M0 0h11v11H0z" fill="#35b4ee" /><path d="M12 0h11v11H12z" fill="#1d9be4" /><path d="M0 12h11v11H0z" fill="#128ddc" /><path d="M12 12h11v11H12z" fill="#0672c8" /></Svg></button>
        <label className="mr-[3px] flex h-[31px] w-[218px] items-center gap-[9px] rounded-full border border-[#d9e6ea] border-b-[#b9ccd3] bg-[#eff8fb] px-[11px]">
          <Svg w={15} h={15} sw={1.7}><circle cx="6.500" cy="6.500" r="5" /><path d="m10 10 4.500 4.500" /></Svg>
          <input aria-label="搜索应用" placeholder="搜索" className="w-full bg-transparent text-sm outline-none placeholder:text-[#555]" />
        </label>
        {apps.map(([n, dot, d]) => (
          <button type="button" key={n} aria-label={n} className="relative flex h-[39px] w-11 items-center justify-center">
            <Svg w={24} h={24} className="stroke-none">{d}</Svg>
            {dot ? <span className="absolute bottom-px h-[3px] w-[6px] rounded-full bg-[#6f8b93]" /> : null}
          </button>
        ))}
        <button type="button" aria-label="Word" className="relative ml-[3px] flex h-[39px] w-[39px] items-center justify-center rounded bg-[#e6f3f8]"><WordLogo s={24} /><span className="absolute bottom-px h-[3px] w-4 rounded-full bg-[#3d7f8f]" /></button>
      </div>
      <div className="flex-1 pb-[2px] pr-[23px] text-right leading-4 text-[#56646b]"><div>17:04</div><div>2025/3/26</div></div>
    </footer>
  );
}

export default function App() {
  return (
    <div className="flex h-screen flex-col overflow-hidden bg-[#e6eff3] font-['Noto_Sans','Noto_Sans_CJK_SC',sans-serif] text-xs text-[#222]">
      <TitleBar />
      <Tabs />
      <Ribbon />
      <div className="flex min-h-0 flex-1 bg-gradient-to-br from-[#e6eff3] via-[#e8eff0] to-[#dcedef]">
        <Document />
        <div className="flex w-[17px] shrink-0 flex-col items-center rounded-lg bg-[#f2f4f4] text-[#666]">
          <Svg w={9} h={8} className="mt-1 fill-current stroke-none"><path d="M0 7.500 4.500 0 9 7.500Z" /></Svg>
          <div className="mt-[238px] h-48 w-[9px] rounded-full bg-[#6e6e6e]" />
          <Svg w={9} h={8} className="mb-[5px] mt-auto fill-current stroke-none"><path d="M0 .5 4.500 8 9 .5Z" /></Svg>
        </div>
        <SidePanel />
      </div>
      <StatusBar />
      <Taskbar />
    </div>
  );
}
